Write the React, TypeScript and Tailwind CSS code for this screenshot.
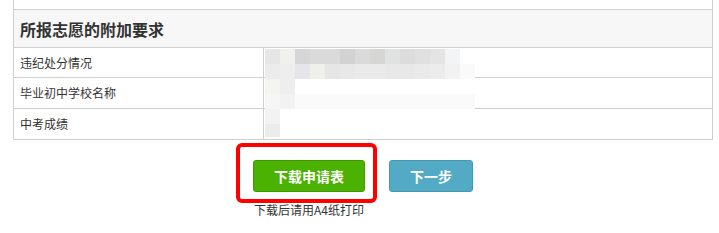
import React from "react";

const ROWS = [
  { label: "违纪处分情况", h: "h-[30px]" },
  { label: "毕业初中学校名称", h: "h-[31px]" },
  { label: "中考成绩", h: "h-[31px]" },
];

// pixelated (blurred) values over the right column
const MOSAIC: string[][] = [
  ["#e6e6e6", "#f0f0ee", "#d6d6d6", "#dadada", "#dadada", "#d2d2d2", "#dadada", "#d6d6d4", "#e0e2e2", "#dcdcdc", "#e0e0e0", "#e4e4e4", "#f2f4f6"],
  ["#ececec", "#eeeeee", "#e6e6ea", "#efefec", "#e6e6e6", "#e8e8e8", "#eaeaea", "#eaeaea", "#e8e8e8", "#e8e8e8", "#eaeaea", "#ececec", "#f2f2f2", "#fafafa"],
  ["#f4f4f2", "#eeeeee"],
  ["#f6f6f6", "#f2f2f2", "#fafafa", "#fafafa", "#fafafa", "#fafafa", "#fafafa", "#fafafa", "#fafafa", "#fafafa", "#fafafa", "#fafafa", "#fafafa", "#fafafa"],
  ["#f2f2f2"],
  ["#ececec"],
];

export default function App() {
  return (
    <div className="relative h-[233px] w-[719px] overflow-hidden bg-white font-['Noto_Sans_CJK_SC','Liberation_Sans',sans-serif] text-[#333]">
      <div className="ml-[13px] w-[700px] border-x border-[#cfcfcf]">
        <div className="h-[10px] border-b border-[#cfcfcf]" />
        <div className="flex h-[38px] items-center border-b border-[#cfcfcf] bg-[#f7f7f7] pl-[6px] text-[16px] font-bold">
          所报志愿的附加要求
        </div>
        {ROWS.map((r) => (
          <div key={r.label} className={`flex ${r.h} border-b border-[#cfcfcf]`}>
            <div className="flex w-[250px] items-center border-r border-[#cfcfcf] pl-[6px] text-[12px]">
              {r.label}
            </div>
            <div className="flex-1" />
          </div>
        ))}
      </div>

      <div className="absolute left-[265px] top-[49px] flex flex-col">
        {MOSAIC.map((row, i) => (
          <div key={i} className={`flex ${i === 5 ? "h-[13px]" : "h-[15px]"}`}>
            {row.map((c, j) => (
              <div key={j} className="w-[15px]" style={{ backgroundColor: c }} />
            ))}
          </div>
        ))}
      </div>

      <div className="ml-[13px] mt-[20px] flex w-[700px] justify-center gap-[24px]">
        <div className="flex flex-col items-center">
          <button
            type="button"
            className="flex h-[32px] w-[112px] items-center justify-center rounded-[3px] border border-[#3f9a02] bg-[#4cb202] text-[14px] font-bold text-white"
          >
            下载申请表
          </button>
          <p className="mt-[11px] text-[12px] leading-[14px] text-[#333]">下载后请用A4纸打印</p>
        </div>
        <button
          type="button"
          className="flex h-[32px] w-[84px] items-center justify-center rounded-[3px] border border-[#4799b1] bg-[#52aac4] text-[14px] font-bold text-white"
        >
          下一步
        </button>
      </div>

      <div className="pointer-events-none absolute left-[236px] top-[143px] h-[60px] w-[141px] rounded-[6px] border-[4px] border-[#ff0000]" />
    </div>
  );
}
